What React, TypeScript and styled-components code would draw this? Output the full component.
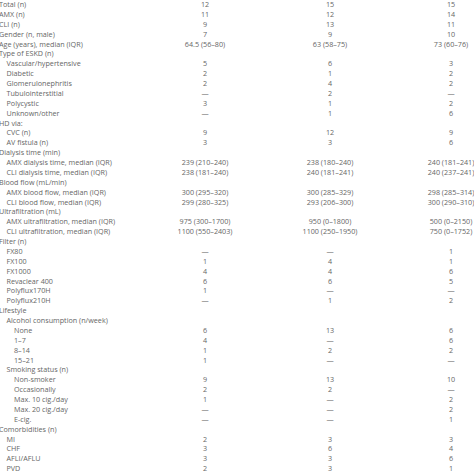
import React from "react";
import styled, { createGlobalStyle } from "styled-components";

const GlobalStyle = createGlobalStyle`
  html, body {
    margin: 0;
    padding: 0;
    background: #ffffff;
    overflow: hidden;
  }
`;

const Table = styled.div`
  display: grid;
  grid-template-columns: 146px 120px 130px 112px;
  width: 508px;
  margin-left: -1px;
  font-family: "Open Sans", "Liberation Sans", sans-serif;
  font-size: 7.2px;
  color: #666666;
  line-height: 9.875px;
`;

const Label = styled.div<{ $level: number }>`
  padding-left: ${(p) => p.$level * 7.5}px;
  white-space: nowrap;
  height: 9.875px;
`;

const Value = styled.div`
  text-align: center;
  white-space: nowrap;
  height: 9.875px;
`;

type Row = [string, number, string?, string?, string?];

const D = "—";

const rows: Row[] = [
  ["Total (n)", 0, "12", "15", "15"],
  ["AMX (n)", 0, "11", "12", "14"],
  ["CLI (n)", 0, "9", "13", "11"],
  ["Gender (n, male)", 0, "7", "9", "10"],
  ["Age (years), median (IQR)", 0, "64.5 (56–80)", "63 (58–75)", "73 (60–76)"],
  ["Type of ESKD (n)", 0],
  ["Vascular/hypertensive", 1, "5", "6", "3"],
  ["Diabetic", 1, "2", "1", "2"],
  ["Glomerulonephritis", 1, "2", "4", "2"],
  ["Tubulointerstitial", 1, D, "2", D],
  ["Polycystic", 1, "3", "1", "2"],
  ["Unknown/other", 1, D, "1", "6"],
  ["HD via:", 0],
  ["CVC (n)", 1, "9", "12", "9"],
  ["AV fistula (n)", 1, "3", "3", "6"],
  ["Dialysis time (min)", 0],
  ["AMX dialysis time, median (IQR)", 1, "239 (210–240)", "238 (180–240)", "240 (181–241)"],
  ["CLI dialysis time, median (IQR)", 1, "238 (181–240)", "240 (181–241)", "240 (237–241)"],
  ["Blood flow (mL/min)", 0],
  ["AMX blood flow, median (IQR)", 1, "300 (295–320)", "300 (285–329)", "298 (285–314)"],
  ["CLI blood flow, median (IQR)", 1, "299 (280–325)", "293 (206–300)", "300 (290–310)"],
  ["Ultrafiltration (mL)", 0],
  ["AMX ultrafiltration, median (IQR)", 1, "975 (300–1700)", "950 (0–1800)", "500 (0–2150)"],
  ["CLI ultrafiltration, median (IQR)", 1, "1100 (550–2403)", "1100 (250–1950)", "750 (0–1752)"],
  ["Filter (n)", 0],
  ["FX80", 1, D, D, "1"],
  ["FX100", 1, "1", "4", "1"],
  ["FX1000", 1, "4", "4", "6"],
  ["Revaclear 400", 1, "6", "6", "5"],
  ["Polyflux170H", 1, "1", D, D],
  ["Polyflux210H", 1, D, "1", "2"],
  ["Lifestyle", 0],
  ["Alcohol consumption (n/week)", 1],
  ["None", 2, "6", "13", "6"],
  ["1–7", 2, "4", D, "6"],
  ["8–14", 2, "1", "2", "2"],
  ["15–21", 2, "1", D, D],
  ["Smoking status (n)", 1],
  ["Non-smoker", 2, "9", "13", "10"],
  ["Occasionally", 2, "2", "2", D],
  ["Max. 10 cig./day", 2, "1", D, "2"],
  ["Max. 20 cig./day", 2, D, D, "2"],
  ["E-cig.", 2, D, D, "1"],
  ["Comorbidities (n)", 0],
  ["MI", 1, "2", "3", "3"],
  ["CHF", 1, "3", "6", "4"],
  ["AFLI/AFLU", 1, "3", "3", "6"],
  ["PVD", 1, "2", "3", "1"],
];

export default function App() {
  return (
    <>
      <GlobalStyle />
      <Table>
        {rows.map(([label, level, a, b, c], i) => (
          <React.Fragment key={i}>
            <Label $level={level}>{label}</Label>
            <Value>{a ?? ""}</Value>
            <Value>{b ?? ""}</Value>
            <Value>{c ?? ""}</Value>
          </React.Fragment>
        ))}
      </Table>
    </>
  );
}
